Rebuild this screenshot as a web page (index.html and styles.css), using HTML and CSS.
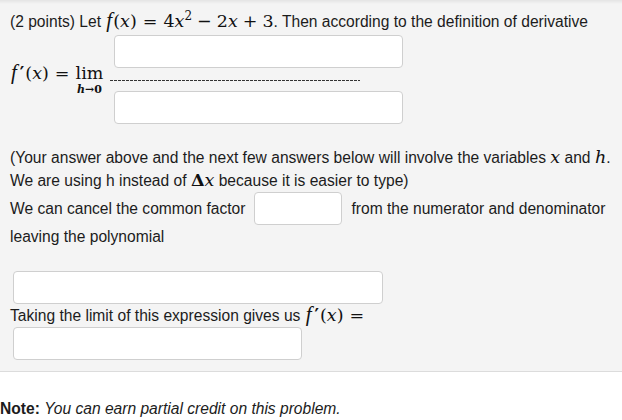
FILE: index.html
```html
<!DOCTYPE html>
<html>
<head>
<meta charset="utf-8">
<link rel="stylesheet" href="styles.css">
</head>
<body>
<div class="problem">
  <p class="line intro">(2 points) Let <span class="m"><i class="f">f</i>(<i>x</i>)<span class="rel">=</span>4<i>x</i><sup>2</sup><span class="bin">−</span>2<i>x</i><span class="bin">+</span>3</span>. Then according to the definition of derivative</p>
  <div class="limit">
    <div class="lhs m">
      <span class="fx"><i class="f">f</i><span class="prime">′</span>(<i>x</i>)<span class="rel">=</span></span>
      <span class="lim"><span class="lim-word">lim</span><span class="lim-sub"><i>h</i>→0</span></span>
    </div>
    <div class="frac">
      <div class="box wide"></div>
      <div class="dashes"></div>
      <div class="box wide"></div>
    </div>
  </div>
  <p class="line note-top">(Your answer above and the next few answers below will involve the variables <span class="m"><i>x</i></span> and <span class="m"><i>h</i></span>.<br>We are using h instead of <span class="m"><b class="delta">Δ</b><i>x</i></span> because it is easier to type)</p>
  <div class="row">
    <span>We can cancel the common factor</span>
    <div class="box small"></div>
    <span>from the numerator and denominator</span>
  </div>
  <p class="line">leaving the polynomial</p>
  <div class="box poly"></div>
  <p class="line">Taking the limit of this expression gives us <span class="m"><i class="f">f</i><span class="prime">′</span>(<i>x</i>)<span class="rel">=</span></span></p>
  <div class="box wide"></div>
</div>
<p class="note"><b>Note:</b> <em>You can earn partial credit on this problem.</em></p>
</body>
</html>
```
FILE: styles.css
```css
html, body {
  margin: 0;
  padding: 0;
  background: #fff;
}
body {
  font-family: "Liberation Sans", Arial, sans-serif;
  font-size: 15.6px;
  color: #1c1c1c;
}
.problem {
  background: linear-gradient(#e4e4e4 0, #f4f4f4 4px);
  border-bottom: 1px solid #dcdcdc;
  padding: 10px 10px 10px 10px;
  height: 351px;
}
.line {
  margin: 0;
  line-height: 23px;
}
.m {
  font-family: "DejaVu Serif", "Liberation Serif", serif;
  font-size: 17.5px;
  color: #111;
}
.m i {
  font-style: italic;
}
.m i.f {
  font-family: "Liberation Serif", serif;
  font-size: 1.2em;
  line-height: 0;
  padding: 0 1px 0 1px;
}
.m sup {
  font-size: 12px;
  vertical-align: 7px;
  line-height: 0;
}
.rel {
  margin: 0 6px;
}
.bin {
  margin: 0 5px;
}
.prime {
  font-family: "DejaVu Sans", sans-serif;
  font-weight: bold;
  font-size: 17px;
  line-height: 0;
  margin: 0 1px 0 2px;
}
.delta {
  font-weight: bold;
  font-family: "DejaVu Serif", serif;
}
.limit {
  display: flex;
  align-items: center;
  margin-top: 2px;
}
.lhs {
  display: flex;
  align-items: flex-start;
  line-height: 20px;
  margin-top: -2px;
}
.lim {
  display: flex;
  flex-direction: column;
  align-items: center;
}
.lim-word {
  line-height: 20px;
}
.lim-sub {
  font-size: 11px;
  line-height: 10px;
  margin-top: 2px;
  font-weight: bold;
}
.frac {
  display: flex;
  flex-direction: column;
  margin-left: 11px;
}
.dashes {
  width: 250px;
  height: 1px;
  margin: 12px 0 10px -4px;
  background: repeating-linear-gradient(to right, #333 0 3px, transparent 3px 4px);
}
.box {
  background: #fff;
  border: 1px solid #cfcfcf;
  border-radius: 4px;
  height: 31px;
  box-sizing: content-box;
}
.wide {
  width: 287px;
}
.problem > .wide {
  margin-left: 3px;
}
.note-top {
  margin-top: 22px;
}
.row {
  display: flex;
  align-items: center;
  gap: 9px;
}
.small {
  width: 86px;
}
.poly {
  width: 368px;
  margin: 23px 0 0 3px;
}
.note {
  margin: 25px 0 0 0;
  line-height: 23px;
}
.note b {
  font-weight: bold;
}
```
